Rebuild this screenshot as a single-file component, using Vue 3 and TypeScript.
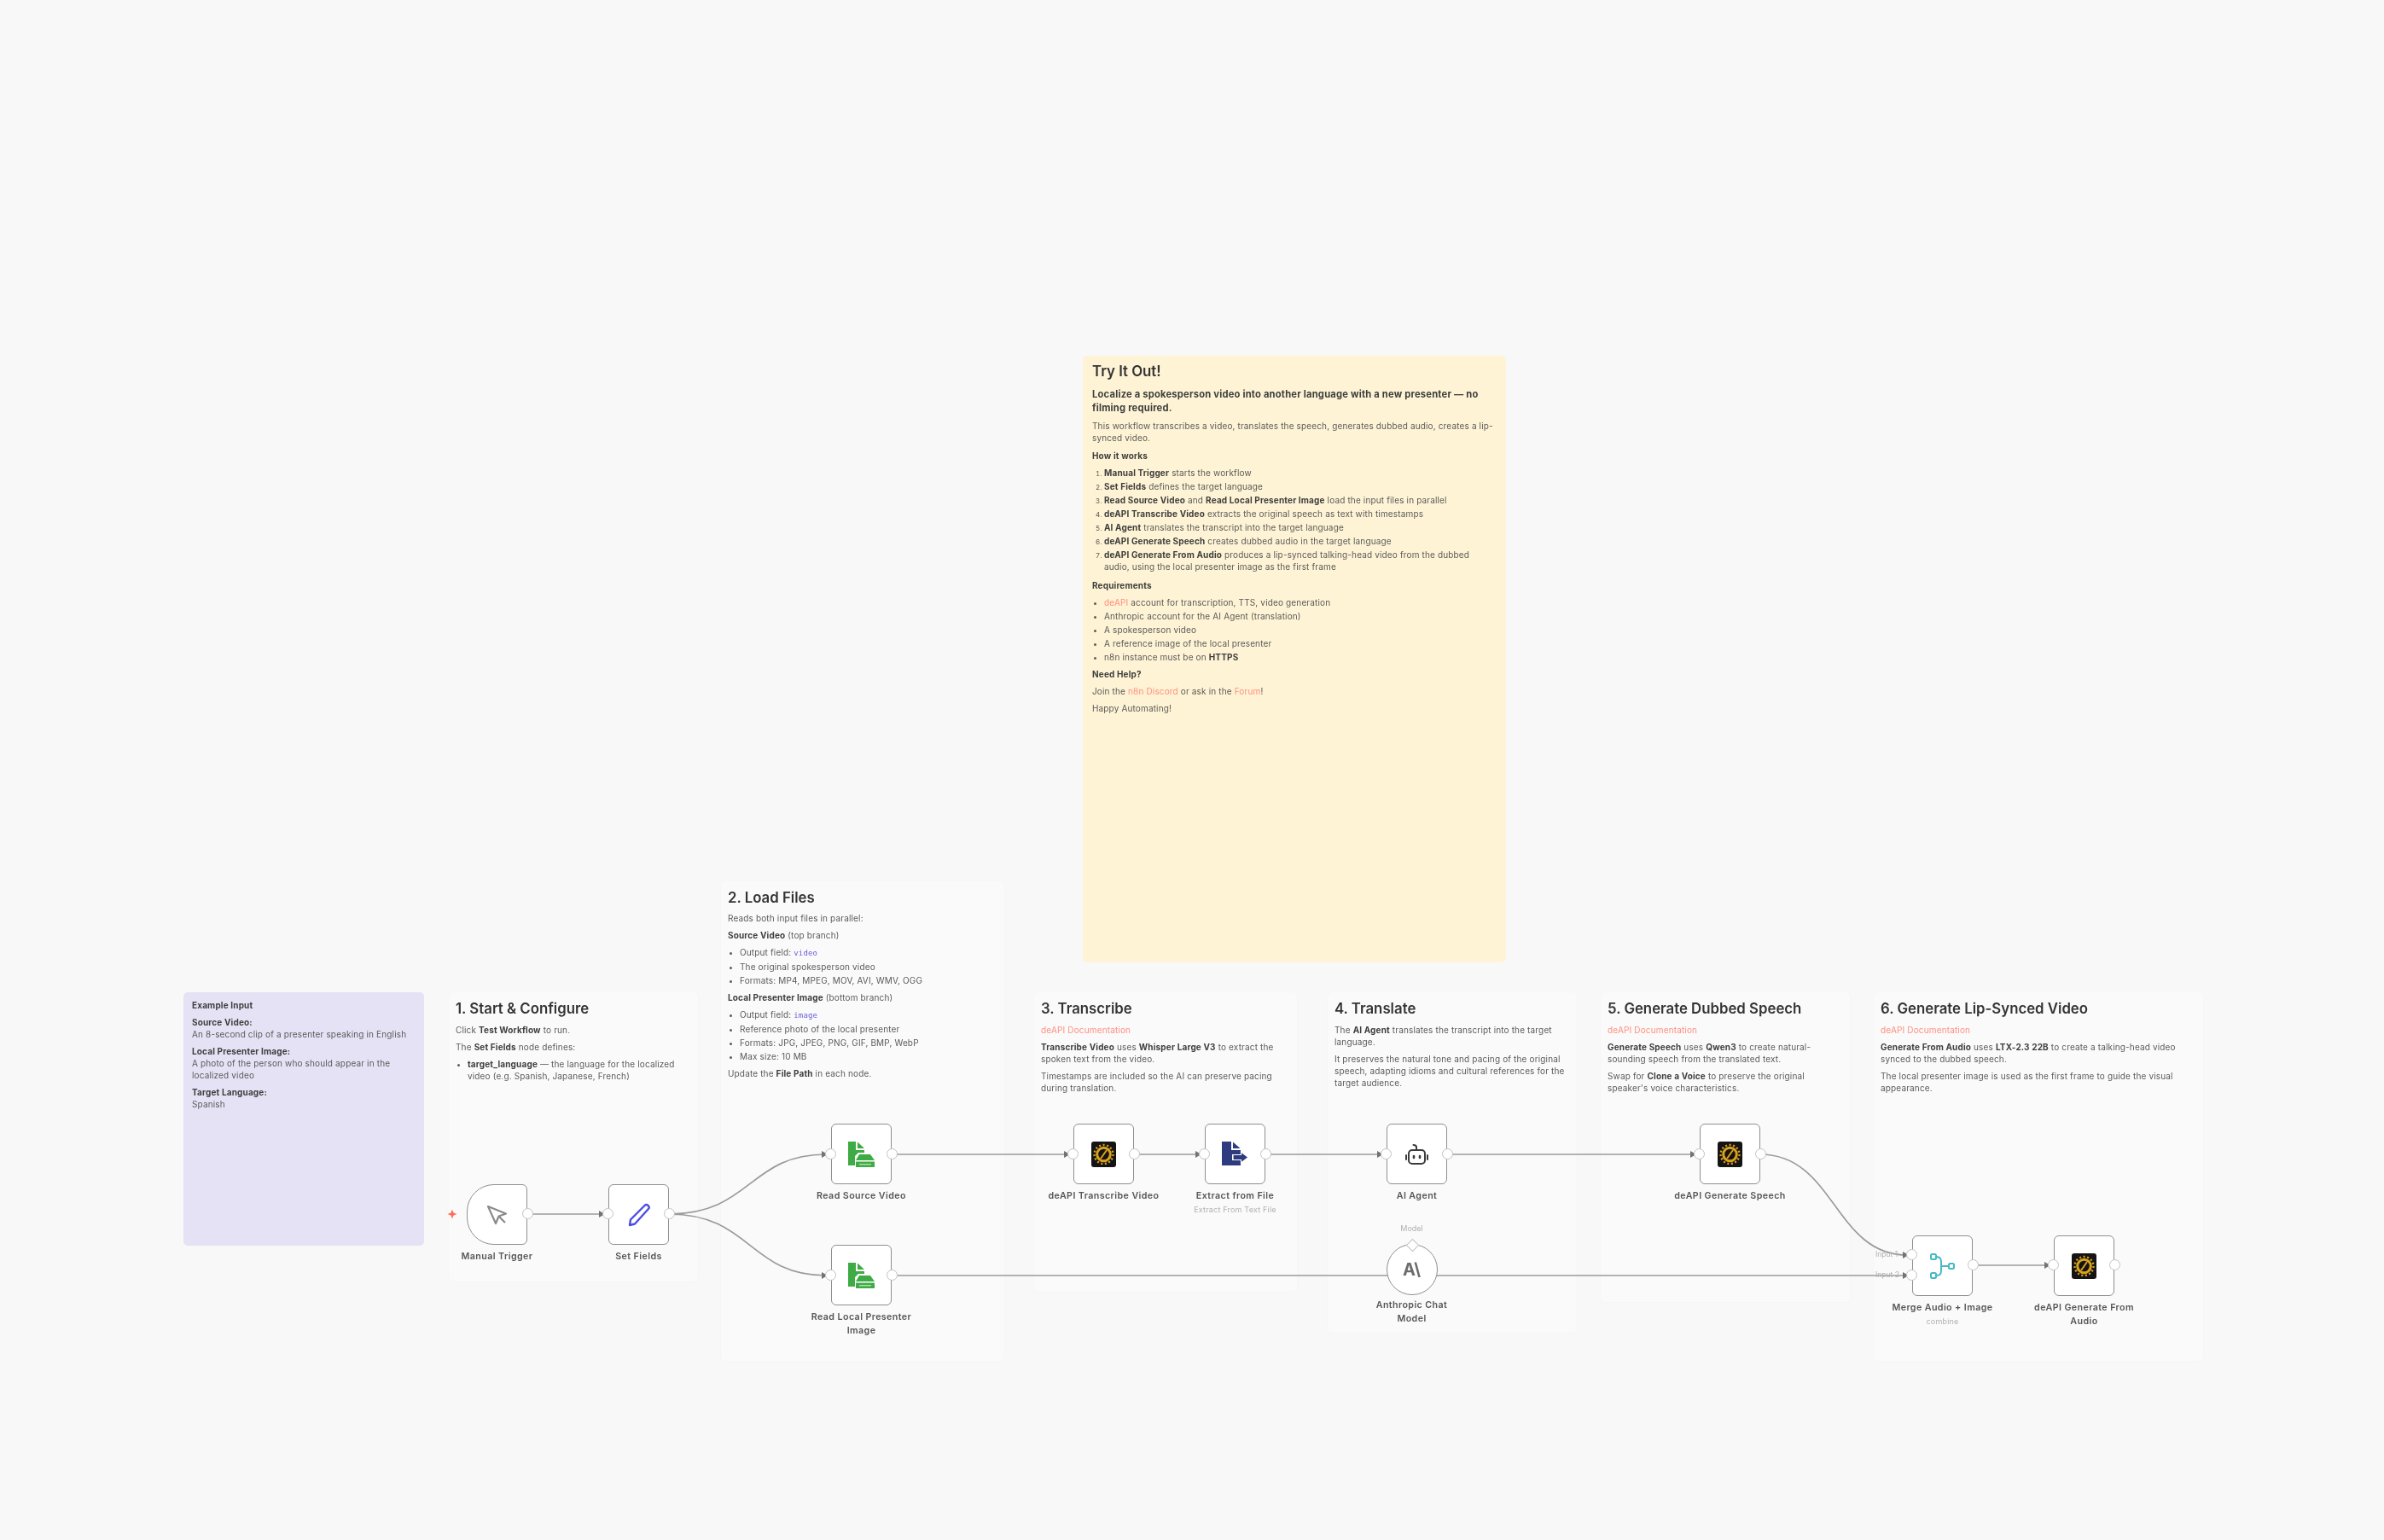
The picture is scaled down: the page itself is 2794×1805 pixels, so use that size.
<script setup lang="ts">
interface FlowNode {
  id: string;
  x: number;
  y: number;
  size: number;
  label: string;
  sub?: string;
  icon: string;
  shape?: string;
  inputs?: number[];
  outputs?: number[];
}

const nodes: FlowNode[] = [
  { id: "trigger", x: 547, y: 1388, size: 71, label: "Manual Trigger", icon: "cursor", shape: "trigger", outputs: [35] },
  { id: "fields", x: 713, y: 1388, size: 71, label: "Set Fields", icon: "pencil", inputs: [35], outputs: [35] },
  { id: "source", x: 974, y: 1317, size: 71, label: "Read Source Video", icon: "file", inputs: [36], outputs: [36] },
  { id: "local", x: 974, y: 1459, size: 71, label: "Read Local Presenter Image", icon: "file", inputs: [36], outputs: [36] },
  { id: "transcribe", x: 1258, y: 1317, size: 71, label: "deAPI Transcribe Video", icon: "deapi", inputs: [36], outputs: [36] },
  { id: "extract", x: 1412, y: 1317, size: 71, label: "Extract from File", sub: "Extract From Text File", icon: "extract", inputs: [36], outputs: [36] },
  { id: "agent", x: 1625, y: 1317, size: 71, label: "AI Agent", icon: "robot", inputs: [36], outputs: [36] },
  { id: "speech", x: 1992, y: 1317, size: 71, label: "deAPI Generate Speech", icon: "deapi", inputs: [36], outputs: [36] },
  { id: "merge", x: 2241, y: 1448, size: 71, label: "Merge Audio + Image", sub: "combine", icon: "merge", inputs: [23, 47], outputs: [35] },
  { id: "audio", x: 2407, y: 1448, size: 71, label: "deAPI Generate From Audio", icon: "deapi", inputs: [35], outputs: [35] },
];

const edges: string[] = [
  "M618 1423H707",
  "M784 1423C880 1423 878 1353 968 1353",
  "M784 1423C880 1423 878 1495 968 1495",
  "M1045 1353H1252",
  "M1329 1353H1406",
  "M1483 1353H1619",
  "M1696 1353H1986",
  "M2063 1353C2150 1353 2150 1471 2235 1471",
  "M1045 1495H2235",
  "M2312 1483H2401",
];

const arrows: number[][] = [
  [713, 1423], [974, 1353], [974, 1495], [1258, 1353], [1412, 1353],
  [1625, 1353], [1992, 1353], [2241, 1471], [2241, 1495], [2407, 1483],
];

function arrowPoints(p: number[]): string {
  const [x, y] = p;
  return `${x - 4},${y} ${x - 11},${y - 4} ${x - 11},${y + 4}`;
}
</script>

<template>
  <div class="canvas">
    <section class="sticky yellow try">
      <h1>Try It Out!</h1>
      <p class="lead">Localize a spokesperson video into another language with a new presenter — no filming required.</p>
      <p>This workflow transcribes a video, translates the speech, generates dubbed audio, creates a lip-synced video.</p>
      <h3 class="how">How it works</h3>
      <ol>
        <li><b>Manual Trigger</b> starts the workflow</li>
        <li><b>Set Fields</b> defines the target language</li>
        <li><b>Read Source Video</b> and <b>Read Local Presenter Image</b> load the input files in parallel</li>
        <li><b>deAPI Transcribe Video</b> extracts the original speech as text with timestamps</li>
        <li><b>AI Agent</b> translates the transcript into the target language</li>
        <li><b>deAPI Generate Speech</b> creates dubbed audio in the target language</li>
        <li><b>deAPI Generate From Audio</b> produces a lip-synced talking-head video from the dubbed audio, using the local presenter image as the first frame</li>
      </ol>
      <h3>Requirements</h3>
      <ul>
        <li><a>deAPI</a> account for transcription, TTS, video generation</li>
        <li>Anthropic account for the AI Agent (translation)</li>
        <li>A spokesperson video</li>
        <li>A reference image of the local presenter</li>
        <li>n8n instance must be on <b>HTTPS</b></li>
      </ul>
      <h3 class="help">Need Help?</h3>
      <p>Join the <a>n8n Discord</a> or ask in the <a>Forum</a>!</p>
      <p>Happy Automating!</p>
    </section>

    <section class="sticky purple example">
      <h3>Example Input</h3>
      <p><b>Source Video:</b><br />An 8-second clip of a presenter speaking in English</p>
      <p><b>Local Presenter Image:</b><br />A photo of the person who should appear in the localized video</p>
      <p><b>Target Language:</b><br />Spanish</p>
    </section>

    <section class="sticky plain step1">
      <h2>1. Start &amp; Configure</h2>
      <p>Click <b>Test Workflow</b> to run.</p>
      <p>The <b>Set Fields</b> node defines:</p>
      <ul>
        <li><b>target_language</b> — the language for the localized video (e.g. Spanish, Japanese, French)</li>
      </ul>
    </section>

    <section class="sticky plain step2">
      <h2>2. Load Files</h2>
      <p>Reads both input files in parallel:</p>
      <p><b>Source Video</b> (top branch)</p>
      <ul>
        <li>Output field: <code>video</code></li>
        <li>The original spokesperson video</li>
        <li>Formats: MP4, MPEG, MOV, AVI, WMV, OGG</li>
      </ul>
      <p><b>Local Presenter Image</b> (bottom branch)</p>
      <ul>
        <li>Output field: <code>image</code></li>
        <li>Reference photo of the local presenter</li>
        <li>Formats: JPG, JPEG, PNG, GIF, BMP, WebP</li>
        <li>Max size: 10 MB</li>
      </ul>
      <p>Update the <b>File Path</b> in each node.</p>
    </section>

    <section class="sticky plain step3">
      <h2>3. Transcribe</h2>
      <p><a>deAPI Documentation</a></p>
      <p><b>Transcribe Video</b> uses <b>Whisper Large V3</b> to extract the spoken text from the video.</p>
      <p>Timestamps are included so the AI can preserve pacing during translation.</p>
    </section>

    <section class="sticky plain step4">
      <h2>4. Translate</h2>
      <p>The <b>AI Agent</b> translates the transcript into the target language.</p>
      <p>It preserves the natural tone and pacing of the original speech, adapting idioms and cultural references for the target audience.</p>
    </section>

    <section class="sticky plain step5">
      <h2>5. Generate Dubbed Speech</h2>
      <p><a>deAPI Documentation</a></p>
      <p><b>Generate Speech</b> uses <b>Qwen3</b> to create natural-sounding speech from the translated text.</p>
      <p>Swap for <b>Clone a Voice</b> to preserve the original speaker's voice characteristics.</p>
    </section>

    <section class="sticky plain step6">
      <h2>6. Generate Lip-Synced Video</h2>
      <p><a>deAPI Documentation</a></p>
      <p><b>Generate From Audio</b> uses <b>LTX-2.3 22B</b> to create a talking-head video synced to the dubbed speech.</p>
      <p>The local presenter image is used as the first frame to guide the visual appearance.</p>
    </section>

    <svg class="edges" width="2794" height="1805">
      <path v-for="d in edges" :key="d" :d="d" />
      <polygon v-for="a in arrows" :key="a.join()" :points="arrowPoints(a)" />
    </svg>

    <svg class="bolt" width="12" height="12" viewBox="0 0 12 12">
      <path d="M6 0.5 7.6 4.4 11.5 6 7.6 7.6 6 11.5 4.4 7.6 0.5 6 4.4 4.4Z" />
    </svg>

    <div
      v-for="n in nodes"
      :key="n.id"
      class="node"
      :style="{ left: n.x + 'px', top: n.y + 'px' }"
    >
      <div class="box" :class="n.shape">
        <svg v-if="n.icon === 'cursor'" width="25" height="24" viewBox="0 0 25 24" fill="none" stroke="#8b8b8b" stroke-width="2.2" stroke-linejoin="round">
          <path d="M2 2 23 10.5 14.5 13.5 11 22Z" />
          <path d="M14.5 13.5 22 21" />
        </svg>
        <svg v-else-if="n.icon === 'pencil'" width="28" height="28" viewBox="0 0 28 28" fill="none" stroke="#4b4ee2" stroke-width="2.4" stroke-linejoin="round">
          <path d="M20.5 3a3 3 0 0 1 4.6 3.8L9 24.5 3 26l1-6.5Z" />
        </svg>
        <svg v-else-if="n.icon === 'file'" width="31" height="30" viewBox="0 0 31 30" fill="#3fab45">
          <path d="M0 0H9V10H19V13H12L8 17V28H0Z" />
          <path d="M11 0.5 19 8H11Z" />
          <path d="M13 15H26L31 22H9Z" />
          <path d="M9 23.5H31V30H9Z" />
          <path d="M13 26H27V27.4H13Z" fill="#fff" opacity=".6" />
        </svg>
        <svg v-else-if="n.icon === 'extract'" width="31" height="29" viewBox="0 0 31 29" fill="#2e3b7f">
          <path d="M0 0H11V10H22V15H12V22H22V28H0Z" />
          <path d="M13 0.5 21.5 8H13Z" />
          <path d="M13 15.5H22.5V12L31 18.5 22.5 25V21.5H13Z" stroke="#fff" stroke-width="1.2" />
        </svg>
        <svg v-else-if="n.icon === 'deapi'" width="29" height="30" viewBox="0 0 29 30">
          <rect width="29" height="30" rx="3" fill="#141414" />
          <circle cx="14.5" cy="15" r="7.8" fill="none" stroke="#d9a21c" stroke-width="3" />
          <circle cx="14.5" cy="15" r="11" fill="none" stroke="#d9a21c" stroke-width="2.4" stroke-dasharray="2 2.6" />
          <path d="M11 20 18 10" stroke="#d9a21c" stroke-width="2" />
        </svg>
        <svg v-else-if="n.icon === 'robot'" width="27" height="24" viewBox="0 0 27 24" fill="none" stroke="#3c3c3c" stroke-width="2" stroke-linecap="round">
          <rect x="4" y="7" width="19" height="16" rx="4" />
          <path d="M1 13V18M26 13V18M13 7V3.5C13 2 11.5 1 9.5 1" />
          <path d="M10 14V16M17 14V16" stroke-width="2.6" />
        </svg>
        <span v-else-if="n.icon === 'merge'" class="merge-icon">
          <svg width="29" height="30" viewBox="0 0 29 30" fill="none" stroke="#45b9c6" stroke-width="2">
            <rect x="1" y="1" width="6" height="6" rx="1.5" />
            <rect x="1" y="23" width="6" height="6" rx="1.5" />
            <rect x="22" y="12" width="6" height="6" rx="1.5" />
            <path d="M7 4C13 4 13 8 13 11V19C13 23 13 26 7 26M13 15H22" />
          </svg>
        </span>
        <i v-for="t in n.inputs" :key="'i' + t" class="handle in" :style="{ top: t + 'px' }"></i>
        <i v-for="t in n.outputs" :key="'o' + t" class="handle out" :style="{ top: t + 'px' }"></i>
      </div>
      <div class="caption">
        <span class="label">{{ n.label }}</span>
        <span v-if="n.sub" class="sub">{{ n.sub }}</span>
      </div>
    </div>

    <div class="model">
      <span class="model-tag">Model</span>
      <i class="diamond"></i>
      <div class="circle"><span class="logo">A\</span></div>
      <span class="label">Anthropic Chat Model</span>
    </div>

    <span class="port-label one">Input 1</span>
    <span class="port-label two">Input 2</span>
  </div>
</template>

<style scoped>
.canvas {
  position: relative;
  width: 2794px;
  height: 1805px;
  overflow: hidden;
  background: #f8f8f8;
  font-family: Inter, "Liberation Sans", sans-serif;
  font-size: 10px;
  line-height: 14px;
  color: #5a5a5a;
  filter: blur(0.7px);
}

.sticky {
  position: absolute;
  box-sizing: border-box;
  padding: 9px 8px;
  border-radius: 5px;
  letter-spacing: 0.15px;
}
.yellow { background: #fef3d4; padding: 8px 11px; }
.purple { background: #e5e2f5; padding: 6px 10px; }
.plain { background: #fafafa; box-shadow: 0 0 0 1px #f6f6f6; }

.try { left: 1269px; top: 417px; width: 496px; height: 711px; }
.example { left: 215px; top: 1163px; width: 282px; height: 297px; }
.step1 { left: 526px; top: 1163px; width: 292px; height: 339px; }
.step2 { left: 845px; top: 1033px; width: 332px; height: 562px; }
.step3 { left: 1212px; top: 1163px; width: 308px; height: 351px; }
.step4 { left: 1556px; top: 1163px; width: 292px; height: 399px; }
.step5 { left: 1876px; top: 1163px; width: 292px; height: 363px; }
.step6 { left: 2196px; top: 1163px; width: 386px; height: 432px; }

h1, h2 {
  margin: 0 0 8px;
  font-size: 16.8px;
  line-height: 20px;
  font-weight: 600;
  letter-spacing: 0;
  color: #343434;
}
h1 { margin-bottom: 9px; }
.step2 h2 { margin-bottom: 7px; }
h3 {
  margin: 8px 0 6px;
  font-size: 10px;
  line-height: 14px;
  font-weight: 700;
  color: #3e3e3e;
}
.example h3 { margin: 2px 0 6px; }
.how { margin-top: 7px; }
.help { margin-top: 6px; }
p { margin: 0 0 6px; }
b { font-weight: 700; color: #3e3e3e; }
a { color: #ff8f80; }
code {
  font-family: "DejaVu Sans Mono", monospace;
  font-size: 9px;
  color: #6a5bd8;
}
.lead {
  font-size: 11.2px;
  line-height: 16px;
  font-weight: 700;
  letter-spacing: 0.2px;
  color: #3e3e3e;
}
ol, ul { margin: 0 0 6px; padding: 0 0 0 14px; }
ul { list-style: disc; }
li { margin-bottom: 2px; }
li::marker { font-size: 8px; }

.edges {
  position: absolute;
  left: 0;
  top: 0;
}
.edges path { fill: none; stroke: #9b9b9b; stroke-width: 1.7; }
.edges polygon { fill: #737373; }

.bolt { position: absolute; left: 524px; top: 1417px; fill: #ff6d5a; }

.node {
  position: absolute;
  width: 71px;
}
.box {
  position: relative;
  box-sizing: border-box;
  width: 71px;
  height: 71px;
  display: flex;
  align-items: center;
  justify-content: center;
  background: #fff;
  border: 1.6px solid #8f8f8f;
  border-radius: 6px;
}
.box.trigger { border-radius: 32px 6px 6px 32px; }
.merge-icon { display: flex; }
.handle {
  position: absolute;
  box-sizing: border-box;
  width: 13px;
  height: 13px;
  margin-top: -8px;
  border: 1.5px solid #c2c2c2;
  border-radius: 50%;
  background: #fff;
}
.handle.in { left: -8px; }
.handle.out { right: -8px; }

.caption {
  position: absolute;
  top: 77px;
  left: -40px;
  width: 151px;
  display: flex;
  flex-direction: column;
  align-items: center;
  text-align: center;
}
.label {
  display: block;
  max-width: 139px;
  font-size: 10.7px;
  line-height: 16px;
  font-weight: 600;
  letter-spacing: 0.4px;
  color: #565656;
}
.sub { font-size: 9px; line-height: 16px; letter-spacing: 0.2px; color: #b0b0b0; }

.model {
  position: absolute;
  left: 1585px;
  top: 1432px;
  width: 139px;
  display: flex;
  flex-direction: column;
  align-items: center;
  text-align: center;
}
.model-tag { font-size: 9px; line-height: 16px; color: #b0b0b0; }
.circle {
  box-sizing: border-box;
  width: 60px;
  height: 60px;
  margin-top: 10px;
  display: flex;
  align-items: center;
  justify-content: center;
  background: #fff;
  border: 1.6px solid #8f8f8f;
  border-radius: 50%;
}
.logo { font-size: 20px; line-height: 20px; font-weight: 700; color: #6c6c6c; }
.diamond {
  position: absolute;
  left: 65px;
  top: 22px;
  width: 9px;
  height: 9px;
  transform: rotate(45deg);
  background: #fff;
  border: 1.4px solid #c2c2c2;
}
.model .label { margin-top: 4px; max-width: 110px; }

.port-label {
  position: absolute;
  left: 2198px;
  font-size: 8.5px;
  line-height: 12px;
  color: #b0b0b0;
}
.port-label.one { top: 1464px; }
.port-label.two { top: 1488px; }
</style>
